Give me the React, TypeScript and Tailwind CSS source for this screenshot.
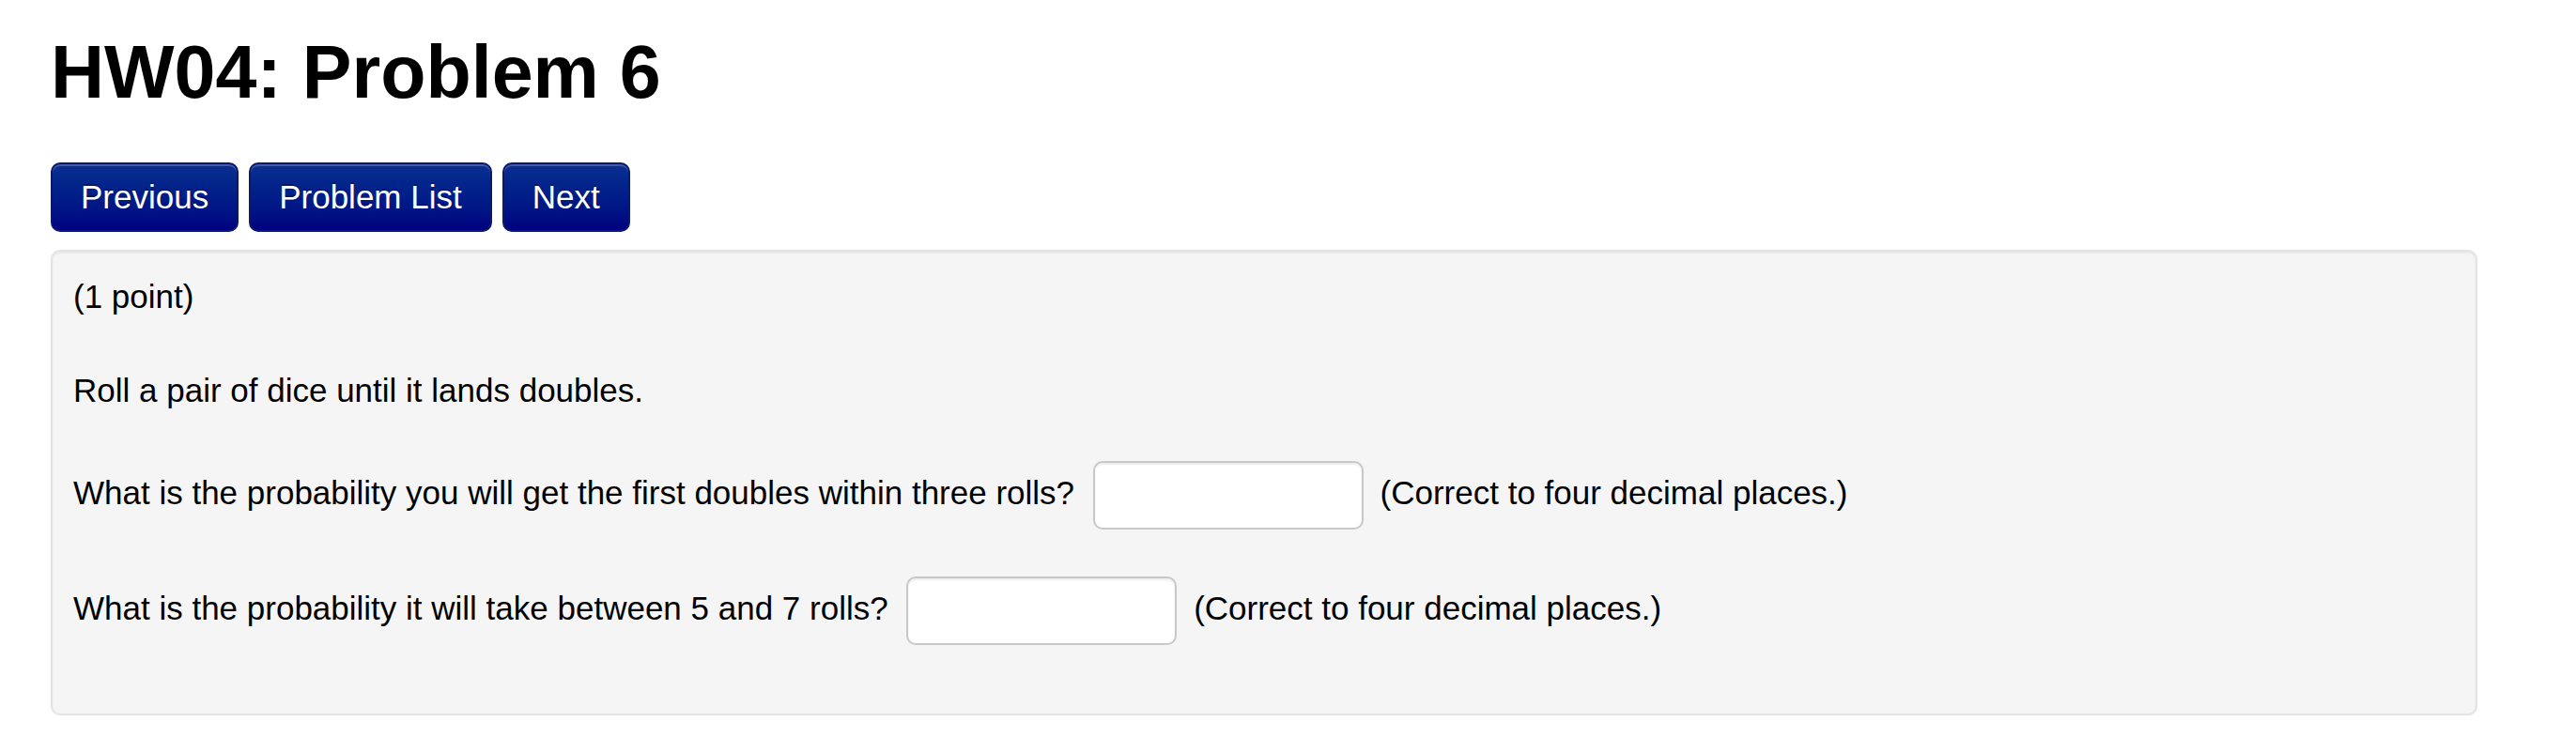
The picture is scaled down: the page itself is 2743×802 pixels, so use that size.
import React from "react";

const btn =
  "box-border rounded-[10px] border-2 border-[#0a1a6a] bg-gradient-to-b from-[#0a2f90] to-[#000080] px-[30px] py-[10px] text-[35px] leading-[50px] text-white shadow-[inset_0_2px_0_rgba(255,255,255,0.22)] [text-shadow:0_-2px_0_rgba(0,0,0,0.25)]";

const inputCls =
  "box-border inline-block h-[73px] align-middle rounded-[10px] border-2 border-[#c8c8c8] bg-white shadow-[inset_0_2px_2px_rgba(0,0,0,0.075)] outline-none";

export default function App() {
  return (
    <div
      className="min-h-[802px] bg-white text-black"
      style={{ fontFamily: '"Liberation Sans", Arial, Helvetica, sans-serif' }}
    >
      <div className="ml-[54px] mr-[105px] pt-[31px]">
        <h1 className="m-0 text-[79px] font-bold leading-[91px]">HW04: Problem 6</h1>

        <div className="mt-[51px] flex gap-[11px]">
          <button className={btn}>Previous</button>
          <button className={btn}>Problem List</button>
          <button className={btn}>Next</button>
        </div>

        <div className="mt-[19px] box-border rounded-[10px] border-2 border-[#e3e3e3] bg-[#f5f5f5] pl-[22px] pr-[22px] pt-[23px] pb-[23px] shadow-[inset_0_2px_2px_rgba(0,0,0,0.05)]">
          <div className="text-[35px] leading-[50px]">
            <div>(1 point)</div>
            <div className="h-[50px]" />
            <div>Roll a pair of dice until it lands doubles.</div>
            <div className="h-[50px]" />
            <div>
              What is the probability you will get the first doubles within three rolls?{" "}
              <input type="text" className={`${inputCls} ml-[10px] mr-[8px] w-[288px]`} />{" "}
              (Correct to four decimal places.)
            </div>
            <div className="h-[50px]" />
            <div>
              What is the probability it will take between 5 and 7 rolls?{" "}
              <input type="text" className={`${inputCls} ml-[10px] mr-[8px] w-[288px]`} />{" "}
              (Correct to four decimal places.)
            </div>
            <div className="h-[50px]" />
          </div>
        </div>
      </div>
    </div>
  );
}
